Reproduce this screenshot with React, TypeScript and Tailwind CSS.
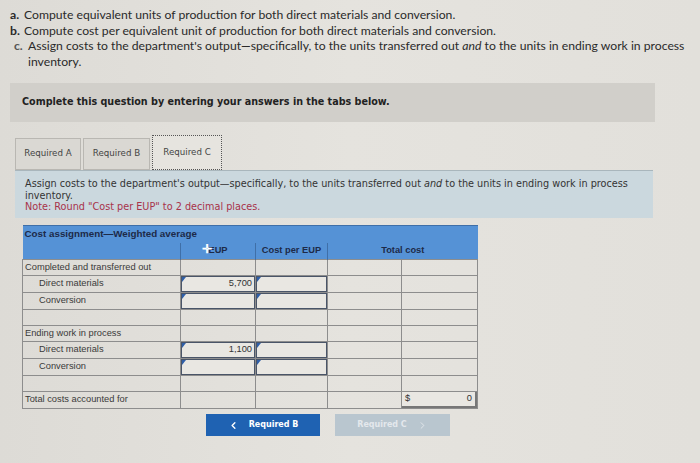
import { ChevronLeft, ChevronRight } from "lucide-react";

const Marker = () => (
  <span className="absolute left-0 top-0 w-0 h-0 border-t-[5px] border-t-[#2f5fa8] border-r-[4px] border-r-transparent" />
);

const InputCell = ({ value }: { value?: string }) => (
  <td className="border border-[#8d8d8d] p-0 h-[16px]">
    <div className="relative h-[16px] border-[1.5px] border-[#4a5568] bg-[#e9e7e2] flex items-center justify-end pr-[2px] text-[#333]">
      <Marker />
      {value}
    </div>
  </td>
);

const Plain = () => <td className="border border-[#8d8d8d] h-[16px] p-0" />;

const rows: { label: string; indent?: boolean; eup?: string; input?: boolean }[] = [
  { label: "Completed and transferred out" },
  { label: "Direct materials", indent: true, eup: "5,700", input: true },
  { label: "Conversion", indent: true, input: true },
  { label: "" },
  { label: "Ending work in process" },
  { label: "Direct materials", indent: true, eup: "1,100", input: true },
  { label: "Conversion", indent: true, input: true },
  { label: "" },
];

export default function App() {
  return (
    <div className="w-[700px] h-[463px] overflow-hidden bg-gradient-to-r from-[#dddbd6] via-[#e5e3de] to-[#e2e0db]">
      {/* instructions */}
      <div className="pt-[7px] pl-[10px] text-[12.2px] leading-[15.5px] text-[#2a2a2a] font-['Lato',sans-serif]">
        <div className="flex">
          <span className="w-[14px] shrink-0 font-bold">a.</span>
          <span>Compute equivalent units of production for both direct materials and conversion.</span>
        </div>
        <div className="flex">
          <span className="w-[14px] shrink-0 font-bold">b.</span>
          <span>Compute cost per equivalent unit of production for both direct materials and conversion.</span>
        </div>
        <div className="flex ml-[4px]">
          <span className="w-[14px] shrink-0 font-bold text-[#555]">c.</span>
          <span>
            Assign costs to the department's output—specifically, to the units transferred out <i>and</i> to the units in ending work in process inventory.
          </span>
        </div>
      </div>

      {/* gray banner */}
      <div className="mt-[14px] ml-[10px] w-[645px] h-[39px] bg-[#d1cfca] flex items-center pl-[12px] font-['DejaVu_Sans',sans-serif] font-bold text-[9.6px] text-[#222]">
        Complete this question by entering your answers in the tabs below.
      </div>

      {/* tabs */}
      <div className="mt-[13px] ml-[15px] flex items-end font-['DejaVu_Sans',sans-serif] text-[8.7px] text-[#444]">
        <div className="w-[66px] h-[32px] bg-[#dad8d3] border border-[#b9b7b2] flex items-center justify-center">Required A</div>
        <div className="ml-[2px] w-[67px] h-[32px] bg-[#dad8d3] border border-[#b9b7b2] flex items-center justify-center">Required B</div>
        <div className="ml-[2px] w-[70px] h-[35px] bg-[#e6e4df] border border-dotted border-[#555] flex items-center justify-center">Required C</div>
      </div>

      {/* blue panel */}
      <div className="ml-[15px] w-[638px] h-[48px] bg-[#cbd8de] border-t border-[#a9b6bc] pl-[10px] pr-[12px] pt-[7px] font-['DejaVu_Sans',sans-serif] text-[9.7px] leading-[11.5px] text-[#333]">
        <div>
          Assign costs to the department's output—specifically, to the units transferred out <i>and</i> to the units in ending work in process inventory.
        </div>
        <div className="text-[#a8324a]">Note: Round "Cost per EUP" to 2 decimal places.</div>
      </div>

      {/* table */}
      <table className="mt-[7px] ml-[22px] border-collapse table-fixed font-['Liberation_Sans',sans-serif] text-[9.3px] text-[#3a3a3a]">
        <colgroup>
          <col className="w-[158px]" />
          <col className="w-[75px]" />
          <col className="w-[72px]" />
          <col className="w-[74px]" />
          <col className="w-[76px]" />
        </colgroup>
        <thead>
          <tr className="bg-[#5592d6]">
            <th colSpan={5} className="h-[17px] p-0 text-left pl-[2px] font-bold text-[9.8px] text-[#1d2a48] border-t border-[#3f6fa8]">
              Cost assignment—Weighted average
            </th>
          </tr>
          <tr className="bg-[#5592d6] text-[#1d2a48] font-bold text-[9.3px]">
            <th className="h-[17px] p-0" />
            <th className="border-l border-r border-[#3f6fa8] relative p-0">
              <span className="absolute left-[21px] top-[1px] text-white text-[12px] leading-[10px]">✛</span>
              EUP
            </th>
            <th className="border-r border-[#3f6fa8] p-0">Cost per EUP</th>
            <th colSpan={2} className="p-0">Total cost</th>
          </tr>
        </thead>
        <tbody>
          {rows.map((r, i) => (
            <tr key={i}>
              <td className={`border border-[#8d8d8d] h-[16px] p-0 ${r.indent ? "pl-[16px]" : "pl-[2px]"}`}>{r.label}</td>
              {r.input ? (
                <>
                  <InputCell value={r.eup} />
                  <InputCell />
                </>
              ) : (
                <>
                  <Plain />
                  <Plain />
                </>
              )}
              <Plain />
              <Plain />
            </tr>
          ))}
          <tr>
            <td className="border border-[#8d8d8d] h-[16px] p-0 pl-[2px]">Total costs accounted for</td>
            <Plain />
            <Plain />
            <Plain />
            <td className="border border-[#8d8d8d] p-0">
              <div className="h-[16px] border-r-2 border-b-2 border-[#777] bg-[#e9e7e2] flex items-center justify-between px-[3px] text-[#333]">
                <span>$</span>
                <span>0</span>
              </div>
            </td>
          </tr>
        </tbody>
      </table>

      {/* nav buttons */}
      <div className="mt-[5px] ml-[206px] flex gap-[15px] font-['DejaVu_Sans',sans-serif] text-[8px] font-bold">
        <button className="w-[114px] h-[22px] bg-[#1f62b2] text-white flex items-center justify-center gap-[10px]">
          <ChevronLeft className="w-[11px] h-[11px]" strokeWidth={3} />
          <span>Required B</span>
        </button>
        <button className="w-[115px] h-[22px] bg-[#b9c6cf] text-[#e4e8ec] flex items-center justify-center gap-[10px]">
          <span>Required C</span>
          <ChevronRight className="w-[11px] h-[11px]" strokeWidth={2} />
        </button>
      </div>
    </div>
  );
}
